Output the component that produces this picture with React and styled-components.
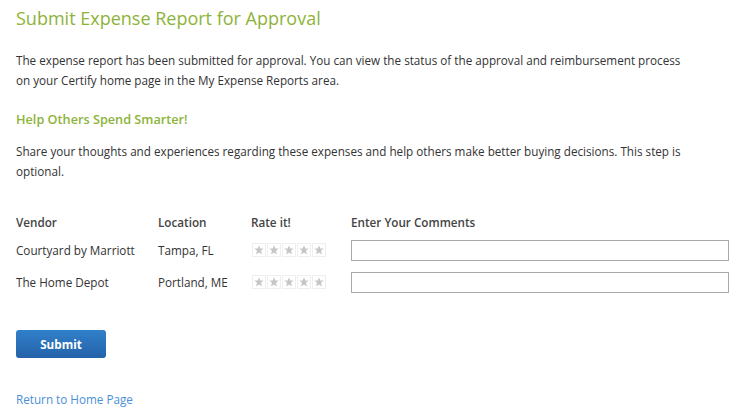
import React from "react";
import styled, { createGlobalStyle } from "styled-components";

const Global = createGlobalStyle`
  html, body { margin: 0; padding: 0; background: #fff; }
  body { font-family: "Open Sans", "Noto Sans", Arial, sans-serif; color: #333; }
`;

const Page = styled.div`
  padding: 5px 20px 0 16px;
  width: 713px;
`;

const Title = styled.h1`
  margin: 0;
  font-size: 18px;
  font-weight: 400;
  color: #8db33a;
  line-height: 26px;
`;

const Para = styled.p`
  margin: ${(p) => p.$mt || 0}px 0 0 0;
  font-size: 11.7px;
  line-height: 20px;
  color: #333;
  max-width: ${(p) => p.$max || 700}px;
`;

const Sub = styled.h2`
  margin: 19px 0 0 0;
  font-size: 12.7px;
  font-weight: 600;
  color: #8db33a;
  line-height: 20px;
`;

const Table = styled.div`
  margin-top: 31px;
  display: grid;
  grid-template-columns: 142px 93px 100px 1fr;
  align-items: center;
`;

const Head = styled.div`
  font-size: 11.7px;
  font-weight: 600;
  color: #444;
  height: 22px;
  line-height: 20px;
`;

const Cell = styled.div`
  font-size: 11.7px;
  color: #333;
  height: 32px;
  display: flex;
  align-items: center;
`;

const Stars = styled.div`
  display: flex;
  gap: 1px;
  padding-left: 1px;
`;

const StarBox = styled.span`
  width: 12px;
  height: 12px;
  border: 1px solid #efefef;
  display: flex;
  align-items: center;
  justify-content: center;
`;

const Input = styled.input`
  width: 100%;
  box-sizing: border-box;
  height: 21px;
  border: 1px solid #aaa;
  padding: 0 4px;
  font-family: inherit;
  font-size: 12px;
  outline: none;
`;

const Button = styled.button`
  margin-top: 32px;
  width: 90px;
  height: 28px;
  border: none;
  border-radius: 3px;
  background: linear-gradient(#3080ca, #2562a9);
  color: #fff;
  font-family: inherit;
  font-weight: 700;
  font-size: 11.7px;
  cursor: pointer;
`;

const Link = styled.a`
  display: block;
  margin-top: 31px;
  font-size: 11.7px;
  color: #4a8fd6;
  text-decoration: none;
  line-height: 20px;
`;

const Star = () => (
  <svg width="10" height="10" viewBox="0 0 10 10">
    <polygon
      points="5,0.3 6.3,3.5 9.7,3.6 7,5.8 8,9.4 5,7.4 2,9.4 3,5.8 0.3,3.6 3.7,3.5"
      fill="#c6c6c6"
    />
  </svg>
);

const Rating = () => (
  <Stars>
    {[0, 1, 2, 3, 4].map((i) => (
      <StarBox key={i}>
        <Star />
      </StarBox>
    ))}
  </Stars>
);

const rows = [
  ["Courtyard by Marriott", "Tampa, FL"],
  ["The Home Depot", "Portland, ME"],
];

export default function App() {
  return (
    <>
      <Global />
      <Page>
        <Title>Submit Expense Report for Approval</Title>
        <Para $mt={19} $max={672}>
          The expense report has been submitted for approval. You can view the status of the approval and reimbursement process on your Certify home page in the My Expense Reports area.
        </Para>
        <Sub>Help Others Spend Smarter!</Sub>
        <Para $mt={12} $max={712}>
          Share your thoughts and experiences regarding these expenses and help others make better buying decisions. This step is optional.
        </Para>
        <Table>
          <Head>Vendor</Head>
          <Head>Location</Head>
          <Head>Rate it!</Head>
          <Head>Enter Your Comments</Head>
          {rows.map(([v, l]) => (
            <React.Fragment key={v}>
              <Cell>{v}</Cell>
              <Cell>{l}</Cell>
              <Cell><Rating /></Cell>
              <Cell><Input type="text" /></Cell>
            </React.Fragment>
          ))}
        </Table>
        <Button>Submit</Button>
        <Link href="#">Return to Home Page</Link>
      </Page>
    </>
  );
}
